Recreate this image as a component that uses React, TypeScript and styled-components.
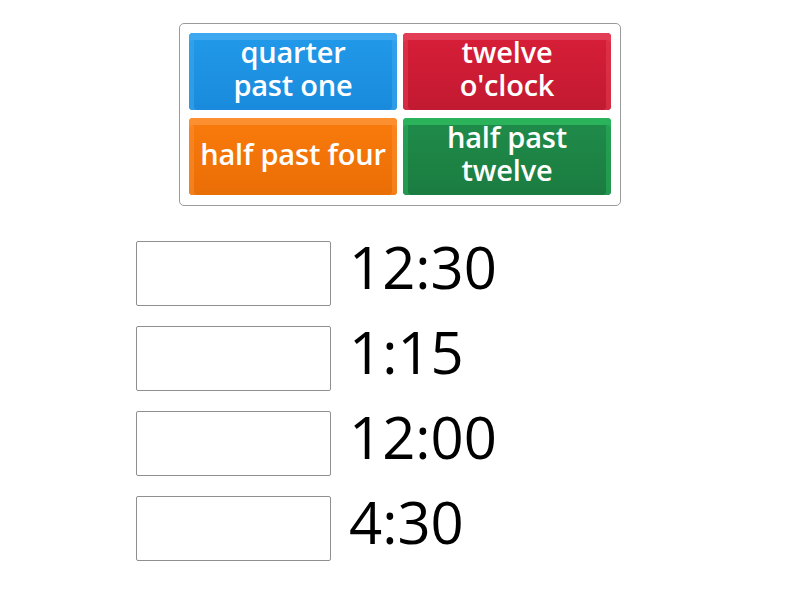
import React from "react";
import styled, { createGlobalStyle } from "styled-components";

const Global = createGlobalStyle`
  html, body { margin: 0; padding: 0; background: #fff; }
  body { font-family: "Open Sans", "Noto Sans", sans-serif; }
`;

const Page = styled.div`
  width: 800px;
  height: 600px;
  padding-top: 23px;
  box-sizing: border-box;
  display: flex;
  flex-direction: column;
  align-items: center;
`;

const Bank = styled.div`
  box-sizing: border-box;
  width: 442px;
  border: 1px solid #9a9a9a;
  border-radius: 5px;
  padding: 9px 9px 10px;
  display: grid;
  grid-template-columns: 208px 208px;
  column-gap: 6px;
  row-gap: 8px;
`;

type TileProps = { $face: string; $light: string; $dark: string };

const Tile = styled.div<TileProps>`
  height: 77px;
  border-radius: 4px;
  background: linear-gradient(${(p) => p.$face}, ${(p) => p.$dark});
  box-shadow: inset 0 7px 0 ${(p) => p.$light}, inset 5px 0 0 ${(p) => p.$light}88,
    inset -5px 0 0 ${(p) => p.$light}88, inset 0 -5px 0 ${(p) => p.$dark};
  display: flex;
  align-items: center;
  justify-content: center;
  text-align: center;
  color: #fff;
  font-weight: 600;
  font-size: 29px;
  line-height: 33px;
  letter-spacing: -0.2px;
  padding: 0 2px 7px;
  box-sizing: border-box;
  white-space: nowrap;
`;

const TileLine = styled.div`
  height: 33px;
`;

const Rows = styled.div`
  margin-top: 35px;
  align-self: flex-start;
  margin-left: 136px;
  display: flex;
  flex-direction: column;
  gap: 20px;
`;

const Row = styled.div`
  display: flex;
  align-items: flex-start;
  gap: 18px;
  height: 65px;
`;

const Slot = styled.div`
  width: 195px;
  height: 65px;
  box-sizing: border-box;
  border: 1px solid #8f8f8f;
  border-radius: 2px;
  background: #fff;
`;

const Time = styled.div`
  font-size: 58px;
  line-height: 65px;
  color: #000;
  font-weight: 400;
  margin-top: -7px;
`;

const tiles = [
  { t: ["quarter", "past one"], face: "#2299e9", light: "#3da8ef", dark: "#1a8bdc" },
  { t: ["twelve", "o'clock"], face: "#d81e38", light: "#e33d55", dark: "#c21a31" },
  { t: ["half past four"], face: "#fa7b0c", light: "#fc8f30", dark: "#ea6e06" },
  { t: ["half past", "twelve"], face: "#1f8c4a", light: "#2ab35b", dark: "#1b7c41" },
];

const times = ["12:30", "1:15", "12:00", "4:30"];

export default function App() {
  return (
    <Page>
      <Global />
      <Bank>
        {tiles.map((x, i) => (
          <Tile key={i} $face={x.face} $light={x.light} $dark={x.dark}>
            <div>
              {x.t.map((l, j) => (
                <TileLine key={j}>{l}</TileLine>
              ))}
            </div>
          </Tile>
        ))}
      </Bank>
      <Rows>
        {times.map((t) => (
          <Row key={t}>
            <Slot />
            <Time>{t}</Time>
          </Row>
        ))}
      </Rows>
    </Page>
  );
}
